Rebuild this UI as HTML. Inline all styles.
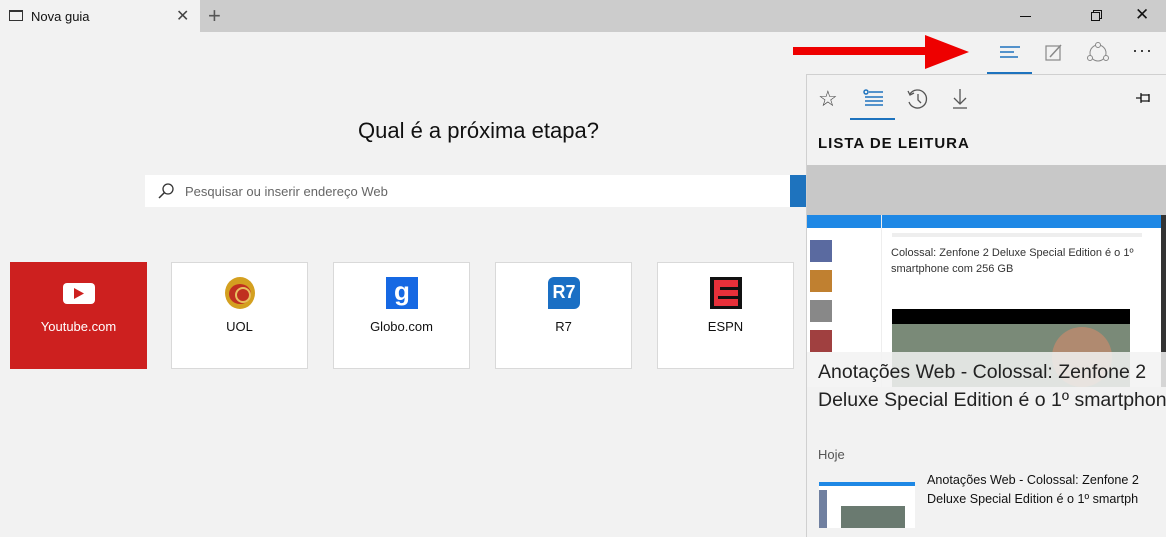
<!DOCTYPE html>
<html><head><meta charset="utf-8"><style>
*{margin:0;padding:0;box-sizing:border-box}
body{width:1166px;height:537px;overflow:hidden;background:#f2f2f2;font-family:"Liberation Sans",sans-serif;position:relative}
.abs{position:absolute}
.tile{position:absolute;top:262px;width:137px;height:107px;background:#fff;border:1px solid #d9d9d9;text-align:center;font-size:13px;color:#111}
.tile .lbl{position:absolute;top:56px;left:0;right:0}
.tile .ic{position:absolute;top:14px;left:52px;width:32px;height:32px}
</style></head><body>
<div class="abs" style="left:0;top:0;width:1166px;height:32px;background:#cccccc"></div>
<div class="abs" style="left:0;top:0;width:200px;height:32px;background:#f2f2f2"></div>
<div class="abs" style="left:9px;top:10px;width:14px;height:11px;border:1px solid #333;border-top-width:2px"></div>
<div class="abs" style="left:31px;top:9px;font-size:13px;color:#111">Nova guia</div>
<div class="abs" style="left:176px;top:6px;font-size:16px;color:#444">✕</div>
<div class="abs" style="left:208px;top:3px;font-size:22px;color:#555;font-weight:300">+</div>
<div class="abs" style="left:1020px;top:16px;width:11px;height:1px;background:#111"></div>
<div class="abs" style="left:1093px;top:10px;width:9px;height:9px;border:1px solid #111"></div>
<div class="abs" style="left:1091px;top:12px;width:9px;height:9px;border:1px solid #111;background:#cccccc"></div>
<div class="abs" style="left:1135px;top:5px;font-size:17px;color:#111">✕</div>
<div class="abs" style="left:793px;top:47px;width:135px;height:8px;background:#e00"></div>
<svg class="abs" style="left:925px;top:35px" width="44" height="34"><polygon points="0,0 44,17 0,34" fill="#e00"/></svg>
<svg class="abs" style="left:998px;top:44px" width="24" height="18"><g stroke="#1e73be" stroke-width="1.5"><line x1="2" y1="3" x2="22" y2="3"/><line x1="2" y1="8" x2="16" y2="8"/><line x1="2" y1="13" x2="20" y2="13"/></g></svg>
<div class="abs" style="left:987px;top:72px;width:45px;height:2px;background:#1e73be"></div>
<svg class="abs" style="left:1045px;top:44px" width="18" height="18"><rect x="1" y="2" width="14" height="14" fill="none" stroke="#888" stroke-width="1.2"/><line x1="5" y1="13" x2="16" y2="1" stroke="#888" stroke-width="1.5"/></svg>
<svg class="abs" style="left:1086px;top:42px" width="24" height="22"><circle cx="12" cy="11" r="8" fill="none" stroke="#888"/><circle cx="12" cy="3" r="2.5" fill="#f2f2f2" stroke="#888"/><circle cx="4" cy="16" r="2.5" fill="#f2f2f2" stroke="#888"/><circle cx="20" cy="16" r="2.5" fill="#f2f2f2" stroke="#888"/></svg>
<div class="abs" style="left:1132px;top:40px;font-size:18px;color:#222;letter-spacing:1px">···</div>
<div class="abs" style="left:358px;top:118px;font-size:22px;color:#111">Qual é a próxima etapa?</div>
<div class="abs" style="left:145px;top:175px;width:650px;height:32px;background:#fff"></div>
<div class="abs" style="left:790px;top:175px;width:16px;height:32px;background:#1e73be"></div>
<svg class="abs" style="left:157px;top:182px" width="18" height="18"><circle cx="11" cy="7" r="5" fill="none" stroke="#333" stroke-width="1.3"/><line x1="7.5" y1="10.5" x2="2" y2="16" stroke="#333" stroke-width="1.5"/></svg>
<div class="abs" style="left:185px;top:184px;font-size:13px;color:#666">Pesquisar ou inserir endereço Web</div>
<div class="tile" style="left:10px;background:#cd201f;border-color:#cd201f;color:#fff"><div class="abs" style="left:52px;top:20px;width:32px;height:21px;background:#fff;border-radius:4px"></div><svg class="abs" style="left:63px;top:25px" width="10" height="11"><polygon points="0,0 10,5.5 0,11" fill="#cd201f"/></svg><div class="lbl">Youtube.com</div></div>
<div class="tile" style="left:171px"><svg class="ic" viewBox="0 0 32 32"><ellipse cx="16" cy="16" rx="15" ry="16" fill="#d4a020"/><ellipse cx="16" cy="17" rx="11" ry="10" fill="#c03020"/><circle cx="19" cy="18" r="7" fill="none" stroke="#e8c060" stroke-width="2"/></svg><div class="lbl">UOL</div></div>
<div class="tile" style="left:333px"><div class="ic" style="background:#1668e3;color:#fff;font-size:26px;font-weight:bold;line-height:28px">g</div><div class="lbl">Globo.com</div></div>
<div class="tile" style="left:495px"><div class="ic" style="background:#1a6fc4;color:#fff;font-size:18px;font-weight:bold;line-height:30px;border-radius:6px 6px 6px 0">R7</div><div class="lbl">R7</div></div>
<div class="tile" style="left:657px"><div class="ic" style="background:#111;width:32px"><div style="position:absolute;left:4px;top:3px;width:24px;height:26px;background:#e8303a"></div><div style="position:absolute;left:10px;top:10px;width:18px;height:3px;background:#111"></div><div style="position:absolute;left:8px;top:19px;width:20px;height:3px;background:#111"></div></div><div class="lbl">ESPN</div></div>
<div class="abs" style="left:806px;top:74px;width:360px;height:463px;background:#f2f2f2;border-left:1px solid #d0d0d0;border-top:1px solid #d0d0d0"></div>
<div class="abs" style="left:818px;top:86px;font-size:22px;color:#444">☆</div>
<svg class="abs" style="left:862px;top:89px" width="24" height="20"><g stroke="#1e73be" stroke-width="1.5" fill="none"><circle cx="4" cy="3" r="2"/><line x1="7" y1="3" x2="21" y2="3"/><line x1="3" y1="8" x2="21" y2="8"/><line x1="3" y1="12" x2="21" y2="12"/><line x1="3" y1="16" x2="21" y2="16"/></g></svg>
<div class="abs" style="left:850px;top:118px;width:45px;height:2px;background:#1e73be"></div>
<svg class="abs" style="left:905px;top:88px" width="24" height="22"><path d="M5 6 A9 9 0 1 1 4 14" fill="none" stroke="#555" stroke-width="1.3"/><polyline points="3,3 5,7 9,5" fill="none" stroke="#555" stroke-width="1.3"/><polyline points="13,6 13,12 16,15" fill="none" stroke="#555" stroke-width="1.3"/></svg>
<svg class="abs" style="left:952px;top:88px" width="16" height="22"><line x1="8" y1="1" x2="8" y2="16" stroke="#555" stroke-width="1.3"/><polyline points="2,10 8,16 14,10" fill="none" stroke="#555" stroke-width="1.3"/><line x1="1" y1="20" x2="15" y2="20" stroke="#555" stroke-width="1.3"/></svg>
<svg class="abs" style="left:1135px;top:92px" width="20" height="12"><g stroke="#111" fill="none" stroke-width="1.2"><line x1="1" y1="6" x2="6" y2="6"/><line x1="6" y1="1" x2="6" y2="11"/><rect x="6" y="3" width="8" height="6"/><line x1="14" y1="2" x2="14" y2="10"/></g></svg>
<div class="abs" style="left:818px;top:135px;font-size:15px;font-weight:bold;color:#111;letter-spacing:1px">LISTA DE LEITURA</div>
<div class="abs" style="left:807px;top:165px;width:359px;height:50px;background:#c8c8c8"></div>
<div class="abs" style="left:807px;top:215px;width:359px;height:172px;background:#fff;overflow:hidden">
 <div class="abs" style="left:0;top:0;width:359px;height:13px;background:#1e88e5"></div>
 <div class="abs" style="left:85px;top:18px;width:250px;height:4px;background:#eee"></div>
 <div class="abs" style="left:84px;top:30px;font-size:11px;color:#333;width:270px;line-height:16px">Colossal: Zenfone 2 Deluxe Special Edition é o 1º smartphone com 256 GB</div>
 <div class="abs" style="left:3px;top:25px;width:22px;height:22px;background:#5a6aa0"></div>
 <div class="abs" style="left:3px;top:55px;width:22px;height:22px;background:#c08030"></div>
 <div class="abs" style="left:3px;top:85px;width:22px;height:22px;background:#888"></div>
 <div class="abs" style="left:3px;top:115px;width:22px;height:22px;background:#a04040"></div>
 <div class="abs" style="left:74px;top:0;width:1px;height:172px;background:#eee"></div>
 <div class="abs" style="left:85px;top:94px;width:238px;height:78px;background:#7a8a78"></div>
 <div class="abs" style="left:85px;top:94px;width:238px;height:15px;background:#000"></div>
 <div class="abs" style="left:245px;top:112px;width:60px;height:60px;background:#b08a70;border-radius:50%"></div>
 <div class="abs" style="left:354px;top:0;width:5px;height:172px;background:#333"></div>
</div>
<div class="abs" style="left:807px;top:352px;width:359px;height:58px;background:rgba(242,242,242,0.85)"></div>
<div class="abs" style="left:818px;top:358px;font-size:19.5px;color:#222;line-height:28px;white-space:nowrap;width:348px;overflow:hidden">Anotações Web - Colossal: Zenfone 2<br>Deluxe Special Edition é o 1º smartphone</div>
<div class="abs" style="left:818px;top:447px;font-size:13px;color:#555">Hoje</div>
<div class="abs" style="left:819px;top:482px;width:96px;height:46px;background:#fff;overflow:hidden"><div style="height:4px;background:#1e88e5"></div><div style="position:absolute;left:22px;top:24px;width:64px;height:22px;background:#6a7a70"></div><div style="position:absolute;left:0;top:8px;width:8px;height:38px;background:#7080a0"></div></div>
<div class="abs" style="left:927px;top:471px;font-size:12.6px;color:#111;line-height:19px;white-space:nowrap">Anotações Web - Colossal: Zenfone 2<br>Deluxe Special Edition é o 1º smartph</div>
</body></html>
